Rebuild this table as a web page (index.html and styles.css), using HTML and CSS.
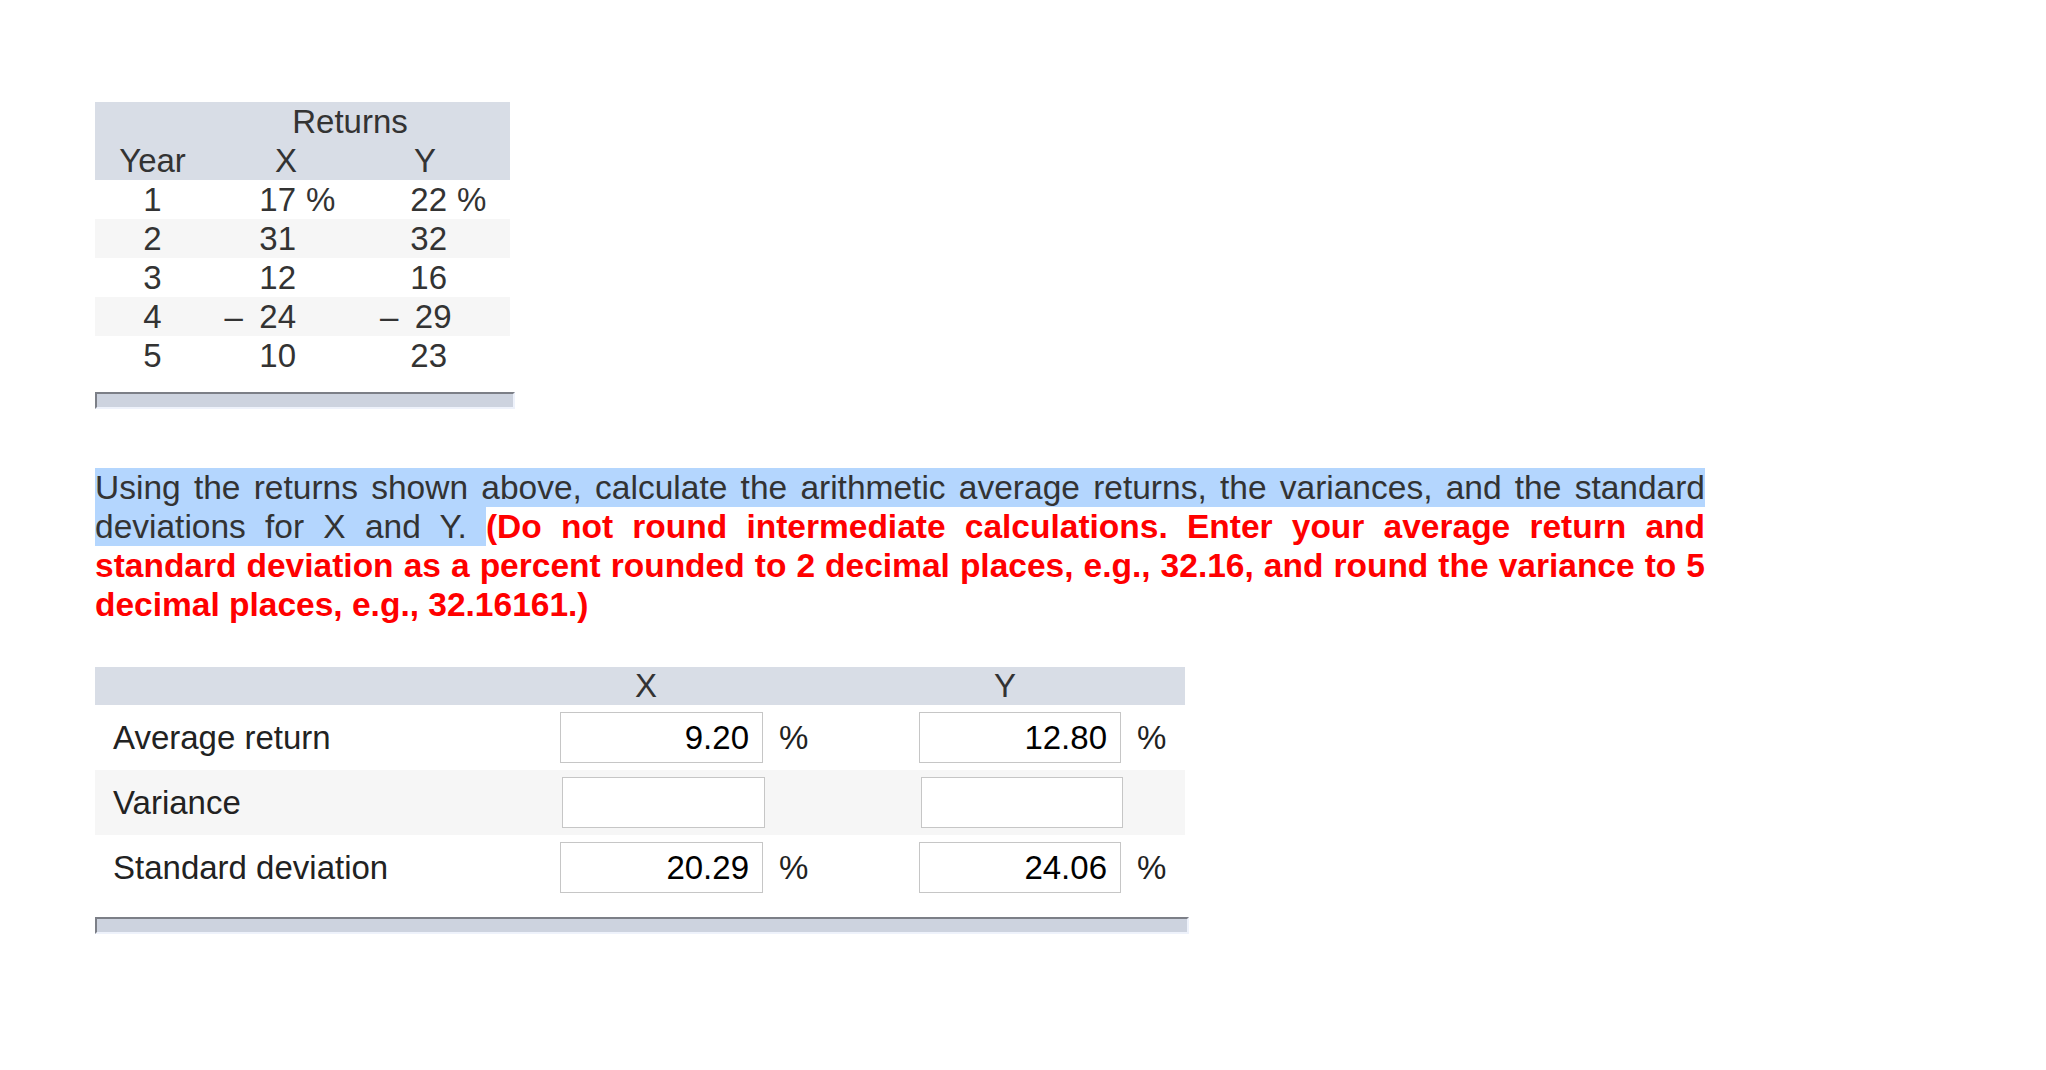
FILE: index.html
```html
<!DOCTYPE html>
<html lang="en">
<head>
<meta charset="utf-8">
<title>Returns</title>
<link rel="stylesheet" href="styles.css">
</head>
<body>
<div class="page">
  <section class="ret-block">
    <div class="ret-table">
      <div class="ret-head">
        <div class="ret-head-top"><span class="ret-returns">Returns</span></div>
        <div class="ret-head-cols"><span>Year</span><span>X</span><span>Y</span></div>
      </div>
      <div class="ret-row"><span class="c-year">1</span><span class="c-num">17</span><span class="c-pct">%</span><span class="c-num">22</span><span class="c-pct">%</span></div>
      <div class="ret-row alt"><span class="c-year">2</span><span class="c-num">31</span><span class="c-pct"></span><span class="c-num">32</span><span class="c-pct"></span></div>
      <div class="ret-row"><span class="c-year">3</span><span class="c-num">12</span><span class="c-pct"></span><span class="c-num">16</span><span class="c-pct"></span></div>
      <div class="ret-row alt"><span class="c-year">4</span><span class="c-num">&ndash;&ensp;24</span><span class="c-pct"></span><span class="c-num">&ndash;&ensp;29</span><span class="c-pct"></span></div>
      <div class="ret-row"><span class="c-year">5</span><span class="c-num">10</span><span class="c-pct"></span><span class="c-num">23</span><span class="c-pct"></span></div>
    </div>
    <div class="hscroll hscroll-small"></div>
  </section>

  <p class="question"><span class="hl">Using the returns shown above, calculate the arithmetic average returns, the variances, and the standard deviations for X and Y. </span><strong class="note">(Do not round intermediate calculations. Enter your average return and standard deviation as a percent rounded to 2 decimal places, e.g., 32.16, and round the variance to 5 decimal places, e.g., 32.16161.)</strong></p>

  <section class="res-block">
    <div class="res-table">
      <div class="res-head"><span></span><span>X</span><span></span><span>Y</span><span></span></div>
      <div class="res-row">
        <span class="res-label">Average return</span>
        <input class="ans" type="text" value="9.20">
        <span class="res-pct">%</span>
        <input class="ans" type="text" value="12.80">
        <span class="res-pct">%</span>
      </div>
      <div class="res-row alt">
        <span class="res-label">Variance</span>
        <input class="ans" type="text" value="">
        <span class="res-pct"></span>
        <input class="ans" type="text" value="">
        <span class="res-pct"></span>
      </div>
      <div class="res-row">
        <span class="res-label">Standard deviation</span>
        <input class="ans" type="text" value="20.29">
        <span class="res-pct">%</span>
        <input class="ans" type="text" value="24.06">
        <span class="res-pct">%</span>
      </div>
    </div>
    <div class="hscroll hscroll-wide"></div>
  </section>
</div>
</body>
</html>
```

FILE: styles.css
```css
html, body {
  margin: 0;
  padding: 0;
  background: #ffffff;
}

body {
  font-family: "Liberation Sans", Arial, Helvetica, sans-serif;
  font-size: 33px;
  color: #333333;
}

.page {
  padding: 102px 0 0 95px;
}

/* ---------- Returns table ---------- */
.ret-table {
  width: 415px;
  line-height: 39px;
}

.ret-head {
  background: #d8dde6;
}

.ret-head-top {
  display: grid;
  grid-template-columns: 115px 280px 20px;
}

.ret-returns {
  grid-column: 2;
  text-align: center;
}

.ret-head-cols {
  display: grid;
  grid-template-columns: 115px 152px 126px 22px;
  text-align: center;
}

.ret-row {
  display: grid;
  grid-template-columns: 115px 86px 84px 67px 63px;
  height: 39px;
}

.ret-row.alt {
  background: #f6f6f6;
}

.c-year {
  text-align: center;
}

.c-num {
  text-align: right;
  white-space: nowrap;
}

.c-pct {
  padding-left: 10px;
}

/* ---------- fake horizontal scrollbar ---------- */
.hscroll {
  box-sizing: border-box;
  height: 17px;
  margin-top: 17px;
  background: #cdd3df;
  border-top: 2px solid #7c7f87;
  border-left: 2px solid #7c7f87;
  border-right: 2px solid #eef2fb;
  border-bottom: 2px solid #eef2fb;
}

.hscroll-small {
  width: 420px;
}

.hscroll-wide {
  width: 1094px;
}

/* ---------- Question text ---------- */
.question {
  margin: 59px 0 0 0;
  width: 1610px;
  font-size: 33.5px;
  line-height: 39px;
  text-align: justify;
  color: #333333;
}

.hl {
  background: #b4d6fe;
  padding: 1px 0;
}

.note {
  color: #ff0000;
  font-weight: bold;
}

/* ---------- Results table ---------- */
.res-block {
  margin-top: 43px;
}

.res-table {
  width: 1090px;
}

.res-head {
  display: grid;
  grid-template-columns: 450px 202px 157px 202px 79px;
  height: 38px;
  line-height: 38px;
  background: #d8dde6;
  text-align: center;
  color: #333333;
}

.res-row {
  display: grid;
  grid-template-columns: 465px 203px 156px 202px 64px;
  align-items: center;
  height: 65px;
  color: #222222;
}

.res-row.alt {
  background: #f6f6f6;
}

.res-row.alt .ans {
  margin-left: 2px;
}

.res-label {
  padding-left: 18px;
}

.res-pct {
  padding-left: 16px;
}

.ans {
  box-sizing: border-box;
  width: 100%;
  height: 51px;
  margin: 0;
  padding: 0 13px 0 0;
  border: 1px solid #c6c6c6;
  border-radius: 0;
  background: #ffffff;
  font-family: "Liberation Sans", Arial, Helvetica, sans-serif;
  font-size: 33px;
  color: #000000;
  text-align: right;
  outline: none;
}
```
